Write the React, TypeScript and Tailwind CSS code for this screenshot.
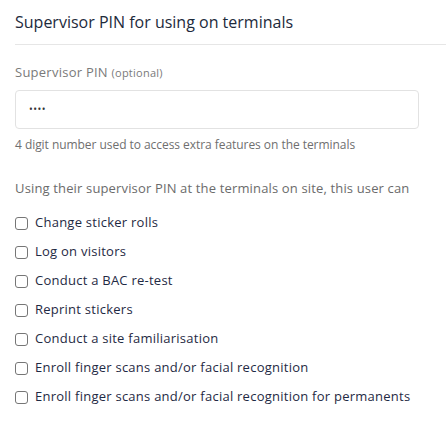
import React from "react";

const items = [
  "Change sticker rolls",
  "Log on visitors",
  "Conduct a BAC re-test",
  "Reprint stickers",
  "Conduct a site familiarisation",
  "Enroll finger scans and/or facial recognition",
  "Enroll finger scans and/or facial recognition for permanents",
];

export default function App() {
  return (
    <div
      className="w-[446px] h-[430px] bg-white pl-[15px] overflow-hidden"
      style={{ fontFamily: "'Open Sans', sans-serif" }}
    >
      <h2 className="pt-[12px] pb-[11px] text-[16px] leading-[21px] text-[#1d2a3b] border-b border-[#e6e6e6]">
        Supervisor PIN for using on terminals
      </h2>
      <div className="pt-[19px] text-[13px] leading-[17px] text-[#7a7a7a] tracking-[0.25px]">
        Supervisor PIN <span className="text-[11px]">(optional)</span>
      </div>
      <div className="mt-[9px] w-[404px] h-[39px] border border-[#e2e2e2] rounded-[4px] flex items-center pl-[13px] text-[#333] text-[10px] tracking-[0.5px]">
        ••••
      </div>
      <div className="mt-[8px] text-[12px] leading-[15px] text-[#6f6f6f] tracking-[-0.05px]">
        4 digit number used to access extra features on the terminals
      </div>
      <div className="mt-[28px] text-[13px] leading-[17px] text-[#6b6b6b] tracking-[0.15px]">
        Using their supervisor PIN at the terminals on site, this user can
      </div>
      <div className="mt-[17px] flex flex-col gap-[12px]">
        {items.map((t) => (
          <label key={t} className="flex items-center gap-[7px] text-[13px] leading-[17px] text-[#1f2a44] tracking-[0.25px]">
            <span className="w-[13px] h-[13px] border border-[#767676] rounded-[3px] bg-white shrink-0 mt-[2px]" />
            <span>{t}</span>
          </label>
        ))}
      </div>
    </div>
  );
}
